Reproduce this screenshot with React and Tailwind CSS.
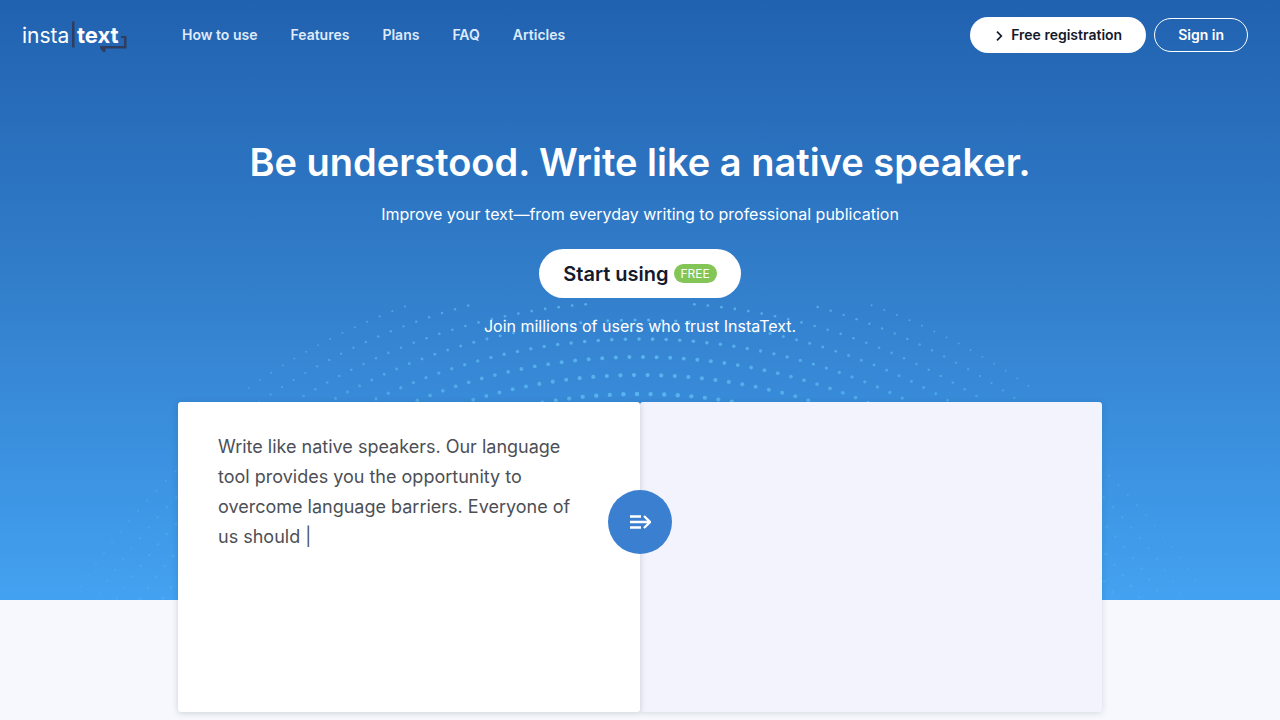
const navLinks = [
  { label: 'How to use', href: '#how-to-use' },
  { label: 'Features', href: '#features' },
  { label: 'Plans', href: '#plans' },
  { label: 'FAQ', href: '#faq' },
  { label: 'Articles', href: '#articles' },
]

// radius of each arc, dot size and where its first dot starts
const arcs = [
  { radius: 538, size: 2.1, start: 0 },
  { radius: 556, size: 2.2, start: -3 },
  { radius: 575, size: 2.1, start: -6 },
  { radius: 593, size: 2, start: 3 },
  { radius: 611, size: 1.8, start: -1 },
  { radius: 630, size: 1.6, start: -5 },
  { radius: 648, size: 1.4, start: 0 },
  { radius: 667, size: 1.3, start: 3 },
  { radius: 685, size: 1.1, start: 5 },
]

const getDots = () => {
  const dots = []
  arcs.forEach(({ radius, size, start }) => {
    for (let i = -60; i <= 60; i++) {
      const angle = (start + i * 13.6) / radius
      const side = Math.abs(angle)
      const x = 560 + radius * Math.sin(angle)
      const y = 650 - radius * Math.cos(angle)
      // the outermost arc ends before it reaches the sides
      if (radius > 680 && side > 0.62) continue
      if (y > 4 && y < 300) {
        dots.push({
          x,
          y,
          r: size * (1 - side * 0.2),
          opacity: Math.max(0.22, 0.85 - side * 0.6),
        })
      }
    }
  })
  return dots
}

const Dots = () => (
  <svg
    className="absolute bottom-0 left-1/2 -translate-x-1/2"
    width="1120"
    height="300"
    viewBox="0 0 1120 300"
    aria-hidden="true"
  >
    {getDots().map((dot, i) => (
      <circle key={i} cx={dot.x} cy={dot.y} r={dot.r} fill="#5fbcf2" opacity={dot.opacity} />
    ))}
  </svg>
)

const Logo = () => (
  <a href="#home" aria-label="instatext" className="block">
    <svg width="108" height="36" viewBox="0 0 108 36">
      <text x="0" y="26" fill="#fff" fontFamily="Inter, sans-serif" fontSize="21" fontWeight="400">
        insta
      </text>
      <text x="55" y="26" fill="#fff" fontFamily="Inter, sans-serif" fontSize="22" fontWeight="700">
        text
      </text>
      <path d="M50 4.500h2.500v26H50z" fill="#2f3d5e" />
      <path d="M99 19h5.500v12.500H83.500v3.500H81l-3-4v-2h24v-8h-3z" fill="#2f3d5e" />
    </svg>
  </a>
)

const Header = () => (
  <header className="flex h-[70px] items-center pl-[22px] pr-8">
    <Logo />
    <nav className="ml-[52px] flex gap-[33px] text-sm font-semibold text-[#dfeafa]">
      {navLinks.map((link) => (
        <a key={link.label} href={link.href}>
          {link.label}
        </a>
      ))}
    </nav>
    <div className="ml-auto flex items-center gap-2 text-sm font-semibold">
      <a
        href="#register"
        className="flex h-9 items-center gap-2 rounded-full bg-white pl-[26px] pr-6 text-[#14192b]"
      >
        <svg width="7" height="10" viewBox="0 0 7 10" fill="none" stroke="currentColor" strokeWidth="1.7" className="mt-0.5">
          <path d="M1 .7 5.300 5 1 9.300" />
        </svg>
        Free registration
      </a>
      <a
        href="#login"
        className="flex h-[34px] items-center rounded-full border border-white px-[23px] text-white"
      >
        Sign in
      </a>
    </div>
  </header>
)

const Demo = () => (
  <div className="relative z-10 mx-auto -mb-28 mt-16 grid h-[310px] w-full max-w-[924px] grid-cols-2">
    <div className="relative z-10 rounded-[3px] bg-white py-[30px] pl-10 pr-16 shadow-[0_1px_6px_rgba(30,50,60,0.2)]">
      <p className="text-lg leading-[30px] text-[#4c4f56]">
        Write like native speakers. Our language tool provides you the opportunity to overcome
        language barriers. Everyone of us should |
      </p>
    </div>
    <div className="rounded-[3px] bg-[#f2f3fd] shadow-[0_1px_6px_rgba(30,50,60,0.15)]"></div>
    <button
      type="button"
      aria-label="Improve text"
      className="absolute left-1/2 top-[88px] z-20 flex size-16 -translate-x-1/2 items-center justify-center rounded-full bg-[#3b7fd0]"
    >
      <svg width="22" height="14" viewBox="0 0 22 14" fill="none" stroke="#fff" strokeWidth="2.300">
        <path d="M1 1.500h11M1 7h20M1 12.500h11M15 1l6 6-6 6" />
      </svg>
    </button>
  </div>
)

const App = () => {
  return (
    <div className="min-h-screen bg-[#f6f8fd] font-['Inter',sans-serif]">
      <div className="relative flex flex-col bg-linear-to-b from-[#2162b0] via-[#3380cd] to-[#43a2f1]">
        <Dots />
        <Header />
        <main className="relative flex flex-col items-center pt-[67px] text-center text-white">
          <h1 className="text-[38px] font-semibold leading-[50px]">
            Be understood. Write like a native speaker.
          </h1>
          <p className="mt-[15px] text-base leading-6">
            Improve your text—from everyday writing to professional publication
          </p>
          <a
            href="#start"
            className="mt-[23px] flex h-[49px] items-center gap-[5px] rounded-full bg-white px-6 text-xl font-semibold text-[#14192b]"
          >
            Start using
            <span className="rounded-full bg-[#84c558] px-[7px] text-xs font-normal leading-[19px] text-white">
              FREE
            </span>
          </a>
          <p className="mt-4 text-base leading-6">Join millions of users who trust InstaText.</p>
          <div className="w-full text-left">
            <Demo />
          </div>
        </main>
      </div>
      <div className="h-[120px]"></div>
    </div>
  )
}

export default App
